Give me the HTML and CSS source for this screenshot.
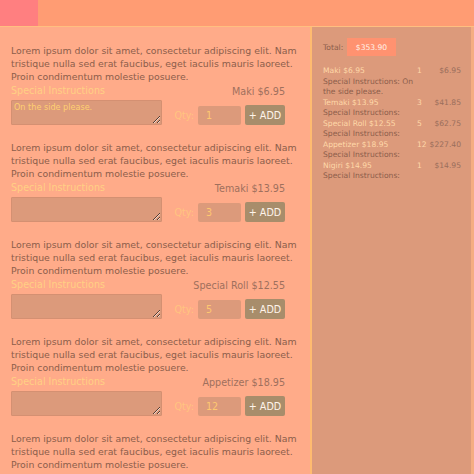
FILE: index.html
```html
<!DOCTYPE html>
<html>
<head>
<meta charset="utf-8">
<link rel="stylesheet" href="styles.css">
</head>
<body>
<header class="topbar"><div class="logo"></div></header>
<div class="layout">
  <main class="menu">
    <section class="item">
      <p class="desc">Lorem ipsum dolor sit amet, consectetur adipiscing elit. Nam tristique nulla sed erat faucibus, eget iaculis mauris laoreet. Proin condimentum molestie posuere.</p>
      <div class="order">
        <div class="notes">
          <label class="notes-label">Special Instructions</label>
          <textarea class="notes-box">On the side please.</textarea>
        </div>
        <div class="buy">
          <div class="name">Maki $6.95</div>
          <div class="buy-row"><span class="qty-label">Qty:</span><input class="qty" value="1"><button class="add">+ ADD</button></div>
        </div>
      </div>
    </section>
    <section class="item">
      <p class="desc">Lorem ipsum dolor sit amet, consectetur adipiscing elit. Nam tristique nulla sed erat faucibus, eget iaculis mauris laoreet. Proin condimentum molestie posuere.</p>
      <div class="order">
        <div class="notes">
          <label class="notes-label">Special Instructions</label>
          <textarea class="notes-box"></textarea>
        </div>
        <div class="buy">
          <div class="name">Temaki $13.95</div>
          <div class="buy-row"><span class="qty-label">Qty:</span><input class="qty" value="3"><button class="add">+ ADD</button></div>
        </div>
      </div>
    </section>
    <section class="item">
      <p class="desc">Lorem ipsum dolor sit amet, consectetur adipiscing elit. Nam tristique nulla sed erat faucibus, eget iaculis mauris laoreet. Proin condimentum molestie posuere.</p>
      <div class="order">
        <div class="notes">
          <label class="notes-label">Special Instructions</label>
          <textarea class="notes-box"></textarea>
        </div>
        <div class="buy">
          <div class="name">Special Roll $12.55</div>
          <div class="buy-row"><span class="qty-label">Qty:</span><input class="qty" value="5"><button class="add">+ ADD</button></div>
        </div>
      </div>
    </section>
    <section class="item">
      <p class="desc">Lorem ipsum dolor sit amet, consectetur adipiscing elit. Nam tristique nulla sed erat faucibus, eget iaculis mauris laoreet. Proin condimentum molestie posuere.</p>
      <div class="order">
        <div class="notes">
          <label class="notes-label">Special Instructions</label>
          <textarea class="notes-box"></textarea>
        </div>
        <div class="buy">
          <div class="name">Appetizer $18.95</div>
          <div class="buy-row"><span class="qty-label">Qty:</span><input class="qty" value="12"><button class="add">+ ADD</button></div>
        </div>
      </div>
    </section>
    <section class="item">
      <p class="desc">Lorem ipsum dolor sit amet, consectetur adipiscing elit. Nam tristique nulla sed erat faucibus, eget iaculis mauris laoreet. Proin condimentum molestie posuere.</p>
    </section>
  </main>
  <aside class="cart">
    <div class="total-row"><span class="total-label">Total:</span><span class="total">$353.90</span></div>
    <table class="lines">
      <tr><td class="ln">Maki $6.95</td><td class="lq">1</td><td class="lp">$6.95</td></tr>
      <tr><td class="li">Special Instructions: On the side please.</td><td></td><td></td></tr>
      <tr><td class="ln">Temaki $13.95</td><td class="lq">3</td><td class="lp">$41.85</td></tr>
      <tr><td class="li">Special Instructions:</td><td></td><td></td></tr>
      <tr><td class="ln">Special Roll $12.55</td><td class="lq">5</td><td class="lp">$62.75</td></tr>
      <tr><td class="li">Special Instructions:</td><td></td><td></td></tr>
      <tr><td class="ln">Appetizer $18.95</td><td class="lq">12</td><td class="lp">$227.40</td></tr>
      <tr><td class="li">Special Instructions:</td><td></td><td></td></tr>
      <tr><td class="ln">Nigiri $14.95</td><td class="lq">1</td><td class="lp">$14.95</td></tr>
      <tr><td class="li">Special Instructions:</td><td></td><td></td></tr>
    </table>
  </aside>
</div>
</body>
</html>
```
FILE: styles.css
```css
* { box-sizing: border-box; }
html, body { margin: 0; padding: 0; height: 100%; }
body {
  background: #ffab89;
  font-family: "DejaVu Sans", Verdana, sans-serif;
  overflow: hidden;
}
.topbar {
  height: 27px;
  background: #ff9c73;
  border-bottom: 1px solid #ffbf80;
  display: flex;
}
.logo { width: 38px; height: 26px; background: #ff7f80; }
.layout { display: flex; height: 447px; overflow: hidden; }
.menu { width: 310px; padding: 17px 3px 0 11px; overflow: hidden; }
.item { height: 97px; }
.desc {
  margin: 0;
  font-size: 9.35px;
  line-height: 13px;
  color: #8c5e4b;
}
.order { display: flex; width: 274px; margin-top: 1px; }
.notes { width: 152px; display: flex; flex-direction: column; }
.notes-label { font-size: 9.6px; line-height: 13px; color: #ffd084; height: 16px; }
.notes-box {
  width: 151px; height: 25px;
  background: #dc9a7b;
  border: 1px solid #d49072;
  border-radius: 1px;
  margin: 0;
  padding: 1px 2px;
  font-family: "DejaVu Sans", sans-serif;
  font-size: 8.1px;
  color: #ffd070;
  resize: vertical;
  outline: none;
}
.buy { flex: 1; display: flex; flex-direction: column; align-items: flex-end; }
.name { font-size: 9.6px; line-height: 13px; color: #a0705d; padding-top: 1px; height: 21px; }
.buy-row { display: flex; align-items: center; }
.qty-label { font-size: 9.6px; color: #ffc480; margin-right: 4px; }
.qty {
  width: 43px; height: 19px;
  background: #dc9a7b;
  border: none;
  border-radius: 2px;
  padding: 0 0 0 8px;
  font-family: "DejaVu Sans", sans-serif;
  font-size: 9.6px;
  color: #ffc870;
  margin-right: 4px;
}
.add {
  width: 40px; height: 20px;
  background: #a88d6b;
  border: none;
  border-radius: 2px;
  color: #fff4ea;
  font-family: "DejaVu Sans", sans-serif;
  font-size: 9.6px;
  padding: 0;
}
.cart {
  flex: 1;
  background: #dc9a7b;
  border-left: 2px solid #ffbb70;
  border-right: 3px solid #f5ad82;
  padding: 11px 10px 0 11px;
}
.total-row { display: flex; align-items: center; height: 18px; }
.total-label { font-size: 7.6px; color: #8c5e4b; width: 24px; }
.total {
  background: #ff9270;
  color: #fff0e6;
  font-size: 7.6px;
  width: 49px; height: 18px;
  display: flex; align-items: center; justify-content: center;
}
.lines { border-collapse: collapse; margin-top: 10px; width: 138px; }
.lines td { padding: 0; font-size: 7.6px; line-height: 10.5px; vertical-align: top; }
.ln { color: #ffd8a8; width: 94px; }
.li { color: #8c5e4b; width: 94px; }
.lq { color: #ffd8a8; width: 12px; }
.lp { color: #9a6e5c; text-align: right; }
```
